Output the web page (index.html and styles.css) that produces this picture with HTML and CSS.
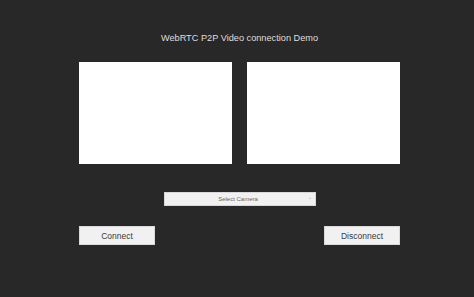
FILE: index.html
```html
<!doctype html>
<html lang="en">
<head>
<meta charset="utf-8">
<title>WebRTC P2P Video connection Demo</title>
<meta name="viewport" content="width=device-width, initial-scale=1">
<link rel="stylesheet" href="styles.css">
</head>
<body>

<main class="app">
  <h1 class="title">WebRTC P2P Video connection Demo</h1>

  <!-- local / remote video -->
  <div class="videos">
    <div class="video" id="local"></div>
    <div class="video" id="remote"></div>
  </div>

  <div class="camera-row">
    <div class="select">
      <span>Select Camera</span>
      <span class="caret">&#8964;</span>
    </div>
  </div>

  <div class="actions">
    <button class="btn" id="connect">Connect</button>
    <button class="btn" id="disconnect">Disconnect</button>
  </div>
</main>

</body>
</html>
```

FILE: styles.css
```css
:root{
  --c-bg:#282828;
  --c-video:#fff;
  --c-btn:#f1f1f1;
  --c-text:#dedede;
  --c-btn-text:#3a3a3a;
}
*{box-sizing:border-box;margin:0;padding:0;}
html,body{height:100%;}
body{background:var(--c-bg);font-family:"Liberation Sans",Arial,sans-serif;color:var(--c-text);}
.app{width:321px;margin-left:79px;padding-top:31px;}
.title{font-size:9.2px;font-weight:400;text-align:center;line-height:14px;margin-bottom:17px;}
.videos{display:flex;justify-content:space-between;}
.video{width:153px;height:102px;background:var(--c-video);}
.camera-row{display:flex;justify-content:center;margin-top:28px;}
.select{
  width:152px;height:14px;
  background:var(--c-btn);
  border:1px solid #d8d8d8;
  display:flex;align-items:center;justify-content:center;
  padding-right:3px;
  position:relative;
  font-size:6px;color:#666;
}
.select .caret{position:absolute;right:3px;top:1px;font-size:5px;color:#999;}
.actions{display:flex;justify-content:space-between;margin-top:20px;}
.btn{
  width:76px;height:19px;
  background:var(--c-btn);
  border:1px solid #dadada;
  font-family:inherit;font-size:8.5px;color:var(--c-btn-text);
}
```
